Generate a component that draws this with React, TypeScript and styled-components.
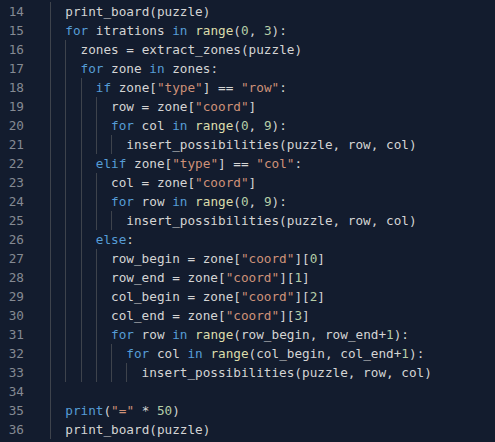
import React from "react";
import styled, { createGlobalStyle } from "styled-components";

const Global = createGlobalStyle`
  html, body { margin: 0; padding: 0; background: #131c2e; }
`;

const Editor = styled.div`
  width: 495px;
  height: 442px;
  box-sizing: border-box;
  padding-top: 2px;
  background: #131c2e;
  font-family: "DejaVu Sans Mono", "Liberation Mono", monospace;
  font-size: 12.7px;
  overflow: hidden;
`;

const Row = styled.div`
  display: flex;
  height: 19px;
  line-height: 19px;
  white-space: pre;
`;

const LineNo = styled.span`
  width: 24px;
  margin-right: 26px;
  text-align: right;
  color: #858a93;
  flex: none;
`;

const Code = styled.span`
  display: flex;
  color: #d4d4d4;
`;

const Indent = styled.span`
  display: inline-block;
  width: 2ch;
  height: 19px;
  box-sizing: border-box;
  border-left: 1px solid #3e434c;
  flex: none;
`;

type Kind = "p" | "k" | "f" | "s" | "n";
const colors: Record<Kind, string> = {
  p: "#d4d4d4",
  k: "#569cd6",
  f: "#dcdcaa",
  s: "#ce9178",
  n: "#b5cea8",
};

const Tok = styled.span<{ $k: Kind }>`
  color: ${(p) => colors[p.$k]};
`;

type T = [Kind, string];
const p = (t: string): T => ["p", t];
const k = (t: string): T => ["k", t];
const f = (t: string): T => ["f", t];
const s = (t: string): T => ["s", t];
const n = (t: string): T => ["n", t];

const ins: T[] = [p("insert_possibilities(puzzle, row, col)")];

const lines: { indent: number; toks: T[] }[] = [
  { indent: 1, toks: [p("print_board(puzzle)")] },
  { indent: 1, toks: [k("for"), p(" itrations "), k("in"), p(" "), f("range"), p("("), n("0"), p(", "), n("3"), p("):")] },
  { indent: 2, toks: [p("zones = extract_zones(puzzle)")] },
  { indent: 2, toks: [k("for"), p(" zone "), k("in"), p(" zones:")] },
  { indent: 3, toks: [k("if"), p(" zone["), s('"type"'), p("] == "), s('"row"'), p(":")] },
  { indent: 4, toks: [p("row = zone["), s('"coord"'), p("]")] },
  { indent: 4, toks: [k("for"), p(" col "), k("in"), p(" "), f("range"), p("("), n("0"), p(", "), n("9"), p("):")] },
  { indent: 5, toks: ins },
  { indent: 3, toks: [k("elif"), p(" zone["), s('"type"'), p("] == "), s('"col"'), p(":")] },
  { indent: 4, toks: [p("col = zone["), s('"coord"'), p("]")] },
  { indent: 4, toks: [k("for"), p(" row "), k("in"), p(" "), f("range"), p("("), n("0"), p(", "), n("9"), p("):")] },
  { indent: 5, toks: ins },
  { indent: 3, toks: [k("else"), p(":")] },
  { indent: 4, toks: [p("row_begin = zone["), s('"coord"'), p("]["), n("0"), p("]")] },
  { indent: 4, toks: [p("row_end = zone["), s('"coord"'), p("]["), n("1"), p("]")] },
  { indent: 4, toks: [p("col_begin = zone["), s('"coord"'), p("]["), n("2"), p("]")] },
  { indent: 4, toks: [p("col_end = zone["), s('"coord"'), p("]["), n("3"), p("]")] },
  { indent: 4, toks: [k("for"), p(" row "), k("in"), p(" "), f("range"), p("(row_begin, row_end+"), n("1"), p("):")] },
  { indent: 5, toks: [k("for"), p(" col "), k("in"), p(" "), f("range"), p("(col_begin, col_end+"), n("1"), p("):")] },
  { indent: 6, toks: ins },
  { indent: 1, toks: [] },
  { indent: 1, toks: [k("print"), p("("), s('"="'), p(" * "), n("50"), p(")")] },
  { indent: 1, toks: [p("print_board(puzzle)")] },
];

export default function App() {
  return (
    <>
      <Global />
      <Editor>
        {lines.map((l, i) => (
          <Row key={i}>
            <LineNo>{14 + i}</LineNo>
            <Code>
              {Array.from({ length: l.indent }).map((_, j) => (
                <Indent key={j} />
              ))}
              <span>
                {l.toks.map(([kind, text], j) => (
                  <Tok key={j} $k={kind}>
                    {text}
                  </Tok>
                ))}
              </span>
            </Code>
          </Row>
        ))}
      </Editor>
    </>
  );
}
